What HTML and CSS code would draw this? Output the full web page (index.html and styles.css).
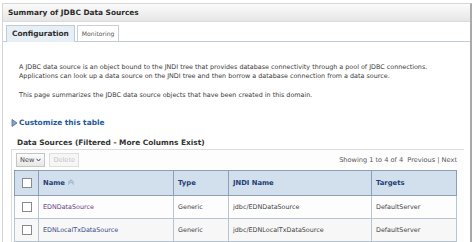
FILE: index.html
```html
<!DOCTYPE html>
<html>
<head>
<meta charset="utf-8">
<link rel="stylesheet" href="styles.css">
</head>
<body>
<div class="page">
  <div class="title">Summary of JDBC Data Sources</div>
  <div class="tabs">
    <div class="tab active">Configuration</div>
    <div class="tab">Monitoring</div>
  </div>
  <div class="content">
    <p class="intro">A JDBC data source is an object bound to the JNDI tree that provides database connectivity through a pool of JDBC connections.<br>Applications can look up a data source on the JNDI tree and then borrow a database connection from a data source.</p>
    <p class="intro">This page summarizes the JDBC data source objects that have been created in this domain.</p>
    <div class="customize">
      <svg class="tri" width="7" height="8" viewBox="0 0 7 8"><path d="M1 0.5 L6 4 L1 7.5 Z" fill="#8aa3c4" stroke="#4a6a96" stroke-width="0.8"/></svg>
      <span>Customize this table</span>
    </div>
    <div class="section">Data Sources (Filtered - More Columns Exist)</div>
    <div class="tablebox">
      <div class="toolbar">
        <div class="btns">
          <span class="btn">New <svg width="5" height="4" viewBox="0 0 5 4"><path d="M0.5 0.8 L2.5 3 L4.5 0.8" fill="none" stroke="#444" stroke-width="1"/></svg></span>
          <span class="btn disabled">Delete</span>
        </div>
        <div class="paging">Showing 1 to 4 of 4 &nbsp;Previous | Next</div>
      </div>
      <table class="grid">
        <thead>
          <tr>
            <th class="cb"><span class="box"></span></th>
            <th class="c-name">Name <svg width="8" height="6" viewBox="0 0 8 6"><path d="M1 3.5 L4 0.8 L7 3.5 M1 5.5 L4 2.8 L7 5.5" fill="none" stroke="#8da0c0" stroke-width="0.9"/></svg></th>
            <th class="c-type">Type</th>
            <th class="c-jndi">JNDI Name</th>
            <th class="c-tgt">Targets</th>
          </tr>
        </thead>
        <tbody>
          <tr>
            <td class="cb"><span class="box"></span></td>
            <td><span class="link visited">EDNDataSource</span></td>
            <td>Generic</td>
            <td>jdbc/EDNDataSource</td>
            <td>DefaultServer</td>
          </tr>
          <tr class="alt">
            <td class="cb"><span class="box"></span></td>
            <td><span class="link">EDNLocalTxDataSource</span></td>
            <td>Generic</td>
            <td>jdbc/EDNLocalTxDataSource</td>
            <td>DefaultServer</td>
          </tr>
        </tbody>
      </table>
    </div>
  </div>
</div>
</body>
</html>
```

FILE: styles.css
```css
html, body {
  margin: 0;
  padding: 0;
  background: #ffffff;
}
body {
  font-family: "DejaVu Sans", Verdana, sans-serif;
  font-size: 6.4px;
  color: #333333;
  height: 242px;
  overflow: hidden;
}
.page {
  margin: 3px 2px 0 2px;
  border: 1px solid #d6d6d6;
  border-right: 2px solid #a9a9a9;
  border-bottom: none;
  height: 250px;
}
.title {
  height: 17px;
  line-height: 17px;
  padding-left: 5px;
  font-weight: bold;
  font-size: 7.4px;
  color: #2c2c2c;
  background: linear-gradient(#fbfbfb, #e6e6e6);
  border-bottom: 1px solid #dcdcdc;
}
.tabs {
  display: flex;
  gap: 2px;
  padding: 3px 0 0 3px;
  border-bottom: 1px solid #c3ccd6;
  height: 16px;
}
.tab {
  padding: 0 4px;
  line-height: 15px;
  border: 1px solid #c8cfd7;
  border-bottom: none;
  font-size: 6.1px;
  color: #555;
  background: #ffffff;
}
.tab.active {
  background: #e7eff6;
  font-weight: bold;
  font-size: 7.4px;
  color: #2d2d2d;
  padding: 0 5px;
  border-color: #c3ccd6;
  margin-bottom: -1px;
  line-height: 16px;
}
.content {
  padding: 0 6px 0 8px;
}
.intro {
  margin: 0;
  padding-left: 8px;
  line-height: 9px;
  color: #3a3a3a;
}
.intro:first-child {
  margin-top: 21px;
}
.intro + .intro {
  margin-top: 10px;
}
.customize {
  margin-top: 18px;
  display: flex;
  align-items: center;
  gap: 1px;
  font-weight: bold;
  font-size: 7.4px;
  color: #24589a;
}
.section {
  margin-top: 11px;
  padding-left: 6px;
  font-weight: bold;
  font-size: 7.4px;
  color: #333;
}
.tablebox {
  margin-top: 2px;
  border: 1px solid #dddddd;
  border-right: none;
  padding: 2px 7px 0 2px;
  background: #fdfdfd;
}
.toolbar {
  display: flex;
  justify-content: space-between;
  align-items: center;
  height: 16px;
  margin-bottom: 2px;
  padding-left: 2px;
}
.btns {
  display: flex;
  gap: 4px;
}
.btn {
  display: inline-flex;
  align-items: center;
  gap: 2px;
  height: 12px;
  padding: 0 3px;
  border: 1px solid #c5c5c5;
  background: linear-gradient(#fdfdfd, #e7e7e7);
  color: #444;
  font-size: 6.6px;
}
.btn.disabled {
  color: #c4c4c4;
  border-color: #dedede;
  background: #f6f6f6;
}
.paging {
  color: #555;
  font-size: 6.6px;
}
.grid {
  width: 100%;
  border-collapse: collapse;
  border: 1px solid #8c9fb6;
  table-layout: fixed;
}
.grid th {
  height: 24px;
  background: #d2dfed;
  border: 1px solid #8c9fb6;
  text-align: left;
  padding: 0 4px;
  font-weight: bold;
  font-size: 6.8px;
  color: #243d74;
}
.grid td {
  height: 22px;
  border: 1px solid #b8c4d2;
  padding: 0 4px;
  color: #444;
  white-space: nowrap;
}
.grid tr.alt td {
  background: #f7f7f7;
}
.grid .cb {
  width: 23px;
  text-align: center;
  padding: 0;
}
.box {
  display: inline-block;
  width: 8px;
  height: 8px;
  border: 1px solid #8a8a8a;
  background: #ffffff;
  vertical-align: middle;
}
.c-name { width: 126px; }
.c-type { width: 46px; }
.c-jndi { width: 134px; }
.link {
  color: #3b4b84;
}
.link.visited {
  color: #6a3a86;
}
```
